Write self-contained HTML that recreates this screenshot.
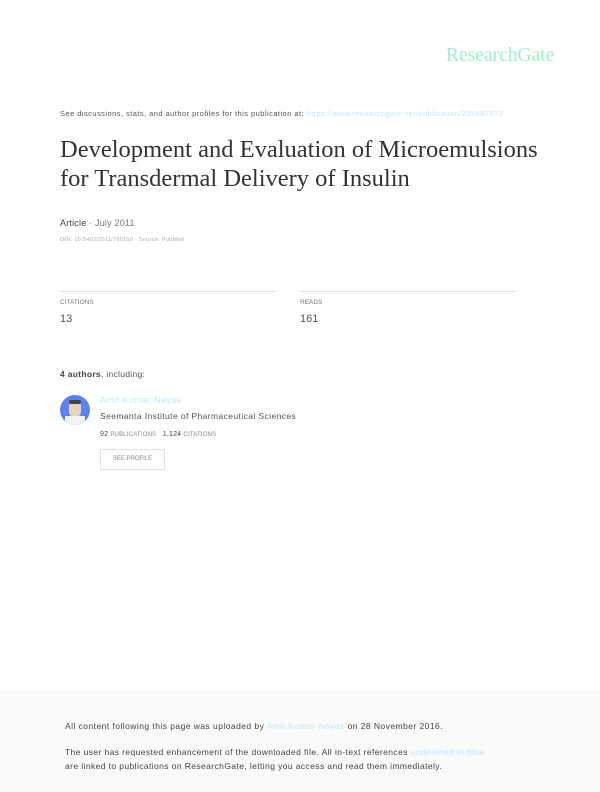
<!DOCTYPE html>
<html><head><style>
body{margin:0;width:600px;height:792px;background:#fff;position:relative;font-family:"Liberation Sans",sans-serif;color:#333;overflow:hidden}
.a{position:absolute;white-space:nowrap}
.lb{color:#c5e6f7}
</style></head><body>
<div class="a" style="left:446px;top:45px;font-family:'Liberation Serif',serif;font-size:19.5px;color:#9ff0c6">ResearchGate</div>
<div class="a" style="left:60px;top:109px;font-size:7.5px;letter-spacing:0.45px;color:#555">See discussions, stats, and author profiles for this publication at: <span class="lb">https://www.researchgate.net/publication/221887572</span></div>
<div class="a" style="left:60px;top:135px;font-family:'Liberation Serif',serif;font-size:24.5px;line-height:29px;color:#333">Development and Evaluation of Microemulsions<br>for Transdermal Delivery of Insulin</div>
<div class="a" style="left:60px;top:218px;font-size:9px;letter-spacing:0.2px;color:#777"><span style="color:#444">Article</span> · July 2011</div>
<div class="a" style="left:60px;top:237px;font-size:5.5px;letter-spacing:0.3px;color:#aaa">DOI: 10.5402/2011/780150 · Source: PubMed</div>
<div class="a" style="left:60px;top:291px;width:216px;border-top:1px solid #e4e4e4"></div>
<div class="a" style="left:300px;top:291px;width:216px;border-top:1px solid #e4e4e4"></div>
<div class="a" style="left:60px;top:299px;font-size:6.5px;color:#777">CITATIONS</div>
<div class="a" style="left:60px;top:313px;font-size:11px;color:#555">13</div>
<div class="a" style="left:300px;top:299px;font-size:6.5px;color:#777">READS</div>
<div class="a" style="left:300px;top:313px;font-size:11px;color:#555">161</div>
<div class="a" style="left:60px;top:369px;font-size:8.5px;letter-spacing:0.3px;color:#555"><b style="color:#444;font-weight:600">4 authors</b>, including:</div>
<div class="a" style="left:60px;top:395px;width:30px;height:30px;border-radius:50%;background:#5b82f0;overflow:hidden"><div style="position:absolute;left:9px;top:6px;width:12px;height:16px;background:#e8d2c0;border-radius:5px"></div><div style="position:absolute;left:5px;top:21px;width:20px;height:12px;background:#f2f2f2"></div><div style="position:absolute;left:9px;top:5px;width:12px;height:4px;background:#444;border-radius:3px"></div></div>
<div class="a lb" style="left:100px;top:395px;font-size:9px;letter-spacing:0.4px">Amit Kumar Nayak</div>
<div class="a" style="left:100px;top:411px;font-size:8.5px;letter-spacing:0.4px;color:#555">Seemanta Institute of Pharmaceutical Sciences</div>
<div class="a" style="left:100px;top:431px;font-size:7px;letter-spacing:0.2px;color:#444">92 <span style="font-size:6px;color:#888">PUBLICATIONS</span>&nbsp;&nbsp;&nbsp;1,124 <span style="font-size:6px;color:#888">CITATIONS</span></div>
<div class="a" style="left:100px;top:449px;width:63px;height:19px;border:1px solid #e2e2e2;font-size:6px;color:#888;text-align:center;line-height:19px">SEE PROFILE</div>
<div class="a" style="left:0;top:690px;width:600px;height:102px;background:#fafafa"></div>
<div class="a" style="left:65px;top:721px;font-size:8.5px;letter-spacing:0.45px;color:#444">All content following this page was uploaded by <span class="lb">Amit Kumar Nayak</span> on 28 November 2016.</div>
<div class="a" style="left:65px;top:745px;font-size:8.5px;letter-spacing:0.4px;line-height:14px;color:#444">The user has requested enhancement of the downloaded file. All in-text references <span class="lb">underlined in blue</span><br>are linked to publications on ResearchGate, letting you access and read them immediately.</div>
</body></html>
